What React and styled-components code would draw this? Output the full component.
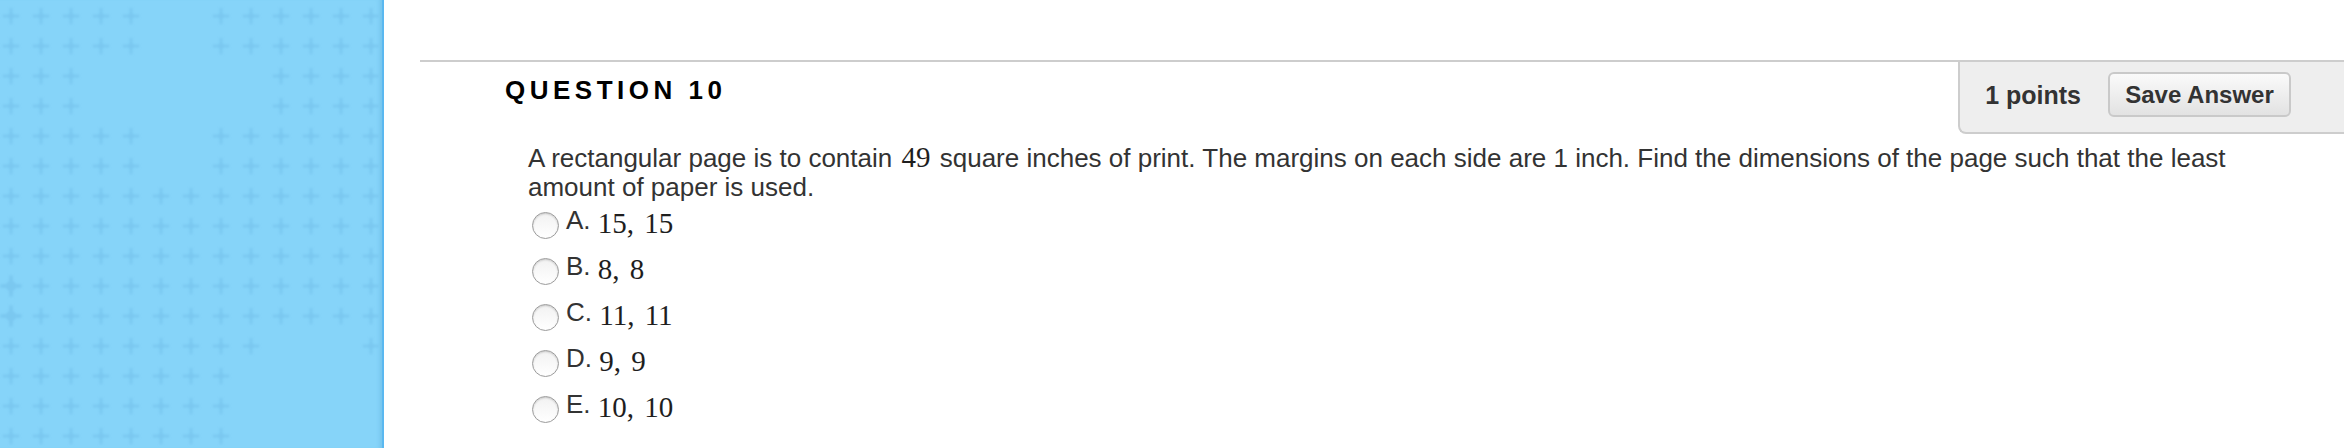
import React from "react";
import styled, { createGlobalStyle } from "styled-components";

const GlobalStyle = createGlobalStyle`
  html, body { margin: 0; padding: 0; height: 100%; background: #fff; overflow: hidden; }
  body { font-family: "Liberation Sans", Arial, Helvetica, sans-serif; }
  #root { height: 100%; }
`;

const Page = styled.div`
  display: flex;
  height: 448px;
  width: 2344px;
`;

const Sidebar = styled.aside`
  flex: 0 0 382px;
  height: 100%;
  background: #86d4f9;
  border-right: 2px solid #5ab8f0;
  box-shadow: inset -5px 0 4px -3px rgba(40, 120, 180, 0.18);
  overflow: hidden;
`;

const Pattern = styled.svg`
  display: block;
`;

const Main = styled.main`
  flex: 1;
  min-width: 0;
  padding: 60px 0 0 36px;
`;

const Header = styled.header`
  display: flex;
  justify-content: space-between;
  align-items: flex-start;
  border-top: 2px solid #cdcdcd;
`;

const Title = styled.h3`
  margin: 13px 0 0 85px;
  font: 700 26px/30px "Liberation Sans", Arial, sans-serif;
  letter-spacing: 4.5px;
  color: #000;
`;

const PointsBox = styled.div`
  display: flex;
  align-items: center;
  gap: 27px;
  padding: 10px 53px 15px 25px;
  background: #eeeeee;
  border-left: 2px solid #cdcdcd;
  border-bottom: 2px solid #cdcdcd;
  border-bottom-left-radius: 8px;
`;

const Points = styled.span`
  font: 700 25px/30px "Liberation Sans", Arial, sans-serif;
  color: #333;
`;

const SaveButton = styled.button`
  box-sizing: border-box;
  width: 183px;
  height: 45px;
  padding: 0;
  border: 2px solid #c9c9c9;
  border-radius: 6px;
  background: linear-gradient(#fafafa, #e2e2e2);
  font: 700 24px/1 "Liberation Sans", Arial, sans-serif;
  color: #333;
  cursor: pointer;
`;

const Body = styled.section`
  padding: 9px 80px 0 108px;
`;

const Prompt = styled.p`
  margin: 0;
  font: 400 26px/29px "Liberation Sans", Arial, sans-serif;
  color: #333;
`;

const MathNum = styled.span`
  font: 400 29px/1 "Liberation Serif", "Times New Roman", serif;
  color: #1e1e1e;
  padding: 0 ${(p) => p.$pad || 0}px;
  vertical-align: ${(p) => p.$shift || 0}px;
  word-spacing: 3px;
`;

const Options = styled.ul`
  list-style: none;
  margin: 0;
  padding: 0 0 0 4px;
`;

const Option = styled.li`
  display: flex;
  align-items: center;
  gap: 7px;
  height: 46px;
`;

const Radio = styled.span`
  box-sizing: border-box;
  flex: 0 0 27px;
  width: 27px;
  height: 27px;
  border-radius: 50%;
  border: 1px solid #9c9c9c;
  background: linear-gradient(#f2f2f2, #ffffff);
  box-shadow: inset 0 1px 2px rgba(0, 0, 0, 0.18);
`;

const Label = styled.span`
  font: 400 26px/29px "Liberation Sans", Arial, sans-serif;
  color: #333;
  padding-bottom: 6px;
  white-space: nowrap;
`;

const patternRows = [
  [0, 1, 2, 3, 4, 7, 8, 9, 10, 11, 12],
  [0, 1, 2, 3, 4, 7, 8, 9, 10, 11, 12],
  [0, 1, 2, 9, 10, 11, 12],
  [0, 1, 2, 9, 10, 11, 12],
  [0, 1, 2, 3, 4, 7, 8, 9, 10, 11, 12],
  [0, 1, 2, 3, 4, 7, 8, 9, 10, 11, 12],
  [0, 1, 2, 3, 4, 5, 6, 7, 8, 9, 10, 11, 12],
  [0, 1, 2, 3, 4, 5, 6, 7, 8, 9, 10, 11, 12],
  [0, 1, 2, 3, 4, 5, 6, 7, 8, 9, 10, 11, 12],
  [0, 1, 2, 3, 4, 5, 6, 7, 8, 9, 10, 11, 12],
  [0, 1, 2, 3, 4, 5, 6, 7, 8, 9, 10, 11, 12],
  [0, 1, 2, 3, 4, 5, 6, 7, 8, 12],
  [0, 1, 2, 3, 4, 5, 6, 7],
  [0, 1, 2, 3, 4, 5, 6, 7],
  [0, 1, 2, 3, 4, 5, 6, 7],
];

function Cross({ cx, cy, big }) {
  const a = big ? 9 : 7;
  const d = big ? 7 : 3.5;
  return (
    <g>
      <path
        d={`M${cx - a} ${cy}H${cx + a}M${cx} ${cy - a}V${cy + a}`}
        stroke="#7bc9f1"
        strokeWidth={big ? 4 : 3}
        strokeLinecap="round"
      />
      <path
        d={`M${cx} ${cy - d}L${cx + d} ${cy}L${cx} ${cy + d}L${cx - d} ${cy}Z`}
        fill="#7ac8f0"
      />
    </g>
  );
}

function SidebarPattern() {
  return (
    <Pattern width="382" height="448" viewBox="0 0 382 448">
      <defs>
        <filter id="soft" x="-10%" y="-10%" width="120%" height="120%">
          <feGaussianBlur stdDeviation="0.9" />
        </filter>
      </defs>
      <g filter="url(#soft)">
        {patternRows.map((cols, r) =>
          cols.map((c) => (
            <Cross
              key={`${r}-${c}`}
              cx={11 + c * 30}
              cy={16 + r * 30}
              big={c === 0 && (r === 9 || r === 10)}
            />
          ))
        )}
      </g>
    </Pattern>
  );
}

const answers = [
  { letter: "A.", value: "15, 15" },
  { letter: "B.", value: "8, 8" },
  { letter: "C.", value: "11, 11" },
  { letter: "D.", value: "9, 9" },
  { letter: "E.", value: "10, 10" },
];

export default function App() {
  return (
    <>
      <GlobalStyle />
      <Page>
        <Sidebar>
          <SidebarPattern />
        </Sidebar>
        <Main>
          <Header>
            <Title>QUESTION 10</Title>
            <PointsBox>
              <Points>1 points</Points>
              <SaveButton type="button">Save Answer</SaveButton>
            </PointsBox>
          </Header>
          <Body>
            <Prompt>
              A rectangular page is to contain{" "}
              <MathNum $pad={2}>49</MathNum>{" "}
              square inches of print. The margins on each side are 1 inch. Find the
              dimensions of the page such that the least amount of paper is used.
            </Prompt>
            <Options>
              {answers.map((a) => (
                <Option key={a.letter}>
                  <Radio />
                  <Label>
                    {a.letter} <MathNum $shift={-4}>{a.value}</MathNum>
                  </Label>
                </Option>
              ))}
            </Options>
          </Body>
        </Main>
      </Page>
    </>
  );
}
